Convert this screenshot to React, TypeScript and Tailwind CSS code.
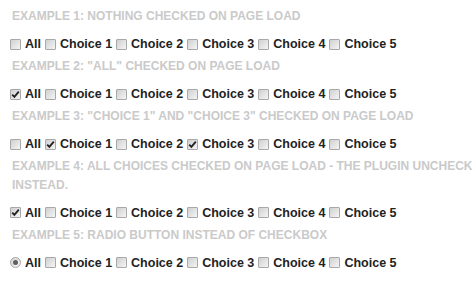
import React from "react";

type Kind = "box" | "radio";

function Box({ checked, kind = "box" }: { checked?: boolean; kind?: Kind }) {
  if (kind === "radio") {
    return (
      <span className="relative mb-[1px] flex h-[11px] w-[11px] shrink-0 items-center justify-center rounded-full border border-[#a3a3a3] bg-gradient-to-br from-[#d4d4d4] to-[#f6f6f6]">
        {checked && <span className="h-[5px] w-[5px] rounded-full bg-[#5e5e5e]" />}
      </span>
    );
  }
  return (
    <span className="relative mb-[1px] flex h-[11px] w-[11px] shrink-0 items-center justify-center rounded-[1px] border border-[#a8a8a8] bg-gradient-to-br from-[#d0d0d0] to-[#f5f5f5]">
      {checked && (
        <svg width="9" height="9" viewBox="0 0 9 9" className="block">
          <path d="M1.2 4.6 L3.4 6.9 L7.8 1.6" fill="none" stroke="#222" strokeWidth="1.8" />
        </svg>
      )}
    </span>
  );
}

function Row({ checked, radio }: { checked: number[]; radio?: boolean }) {
  const labels = ["All", "Choice 1", "Choice 2", "Choice 3", "Choice 4", "Choice 5"];
  return (
    <div className="mt-[12.4px] flex h-[13px] items-center gap-[4px] pl-[10px] text-[12.5px] leading-[13px] font-bold text-[#222]">
      {labels.map((l, i) => (
        <span key={l} className="flex items-center gap-[4px] whitespace-nowrap">
          <Box checked={checked.includes(i)} kind={radio && i === 0 ? "radio" : "box"} />
          <span>{l}</span>
        </span>
      ))}
    </div>
  );
}

function Heading({ children }: { children: React.ReactNode }) {
  return (
    <div className="overflow-hidden whitespace-nowrap pl-[12px] text-[12px] leading-[18.6px] font-bold text-[#cacaca]">
      {children}
    </div>
  );
}

export default function App() {
  return (
    <div
      className="h-[286px] w-[474px] overflow-hidden bg-white pt-[7.2px]"
      style={{ fontFamily: '"Liberation Sans", Arial, Helvetica, sans-serif' }}
    >
      <div className="flex flex-col gap-[6px]">
        <div>
          <Heading>EXAMPLE 1: NOTHING CHECKED ON PAGE LOAD</Heading>
          <Row checked={[]} />
        </div>
        <div>
          <Heading>EXAMPLE 2: "ALL" CHECKED ON PAGE LOAD</Heading>
          <Row checked={[0]} />
        </div>
        <div>
          <Heading>EXAMPLE 3: "CHOICE 1" AND "CHOICE 3" CHECKED ON PAGE LOAD</Heading>
          <Row checked={[1, 3]} />
        </div>
        <div>
          <Heading>
            EXAMPLE 4: ALL CHOICES CHECKED ON PAGE LOAD - THE PLUGIN UNCHECK
            <br />
            INSTEAD.
          </Heading>
          <Row checked={[0]} />
        </div>
        <div>
          <Heading>EXAMPLE 5: RADIO BUTTON INSTEAD OF CHECKBOX</Heading>
          <Row checked={[0]} radio />
        </div>
      </div>
    </div>
  );
}
